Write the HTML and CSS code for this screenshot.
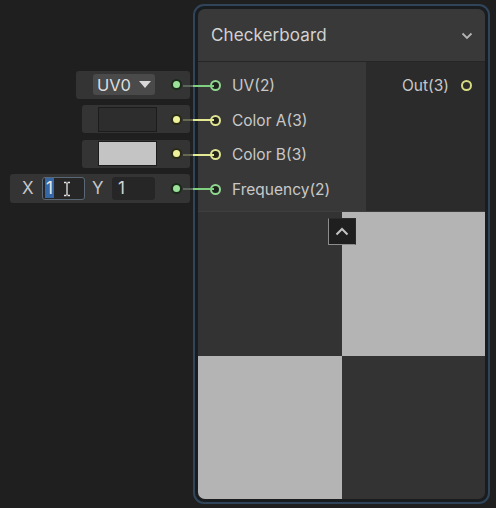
FILE: index.html
```html
<!DOCTYPE html>
<html>
<head>
<meta charset="utf-8">
<link rel="stylesheet" href="styles.css">
</head>
<body>
<div class="canvas">
  <div class="ports-col">
    <div class="prow">
      <div class="ctl ctl-uv">
        <div class="dropdown"><span>UV0</span><span class="tri"></span></div>
        <span class="dot green"></span>
        <span class="wire wire-green"></span>
      </div>
    </div>
    <div class="prow">
      <div class="ctl ctl-color">
        <span class="swatch swatch-dark"></span>
        <span class="dot yellow"></span>
        <span class="wire wire-yellow"></span>
      </div>
    </div>
    <div class="prow">
      <div class="ctl ctl-color">
        <span class="swatch swatch-light"></span>
        <span class="dot yellow"></span>
        <span class="wire wire-yellow"></span>
      </div>
    </div>
    <div class="prow">
      <div class="ctl ctl-freq">
        <span class="axis">X</span>
        <span class="field field-focus"><span class="sel">1</span>
          <svg class="ibeam" width="8" height="16" viewBox="0 0 8 16"><path d="M1 1.5h2.5M4.5 1.5H7M4 2v12M1 14.5h2.5M4.5 14.5H7" stroke="#e6e6e6" stroke-width="1.3" fill="none"/></svg>
        </span>
        <span class="axis axis-y">Y</span>
        <span class="field"><span class="val">1</span></span>
        <span class="dot green"></span>
        <span class="wire wire-green"></span>
      </div>
    </div>
  </div>

  <div class="node">
    <div class="node-inner">
      <div class="header">
        <span class="title">Checkerboard</span>
        <svg class="chev" width="12" height="8" viewBox="0 0 12 8"><path d="M1.5 1.5L6 6l4.5-4.5" stroke="#b4b4b4" stroke-width="1.8" fill="none"/></svg>
      </div>
      <div class="io">
        <div class="inputs">
          <div class="slot"><span class="port port-green"></span><span class="label">UV(2)</span></div>
          <div class="slot"><span class="port port-yellow"></span><span class="label">Color A(3)</span></div>
          <div class="slot"><span class="port port-yellow"></span><span class="label">Color B(3)</span></div>
          <div class="slot"><span class="port port-green"></span><span class="label">Frequency(2)</span></div>
        </div>
        <div class="outputs">
          <div class="slot slot-out"><span class="label">Out(3)</span><span class="port port-out"></span></div>
        </div>
      </div>
      <div class="preview">
        <div class="checker">
          <span class="cell cell-dark"></span>
          <span class="cell cell-light"></span>
          <span class="cell cell-light"></span>
          <span class="cell cell-dark"></span>
        </div>
        <div class="collapse">
          <svg width="14" height="9" viewBox="0 0 14 9"><path d="M1.5 7.5L7 2l5.5 5.5" stroke="#c4c4c4" stroke-width="2" fill="none"/></svg>
        </div>
      </div>
    </div>
  </div>
</div>
</body>
</html>
```

FILE: styles.css
```css
html, body {
  margin: 0;
  padding: 0;
  background: #1f1f1f;
}

.canvas {
  display: flex;
  align-items: flex-start;
  width: 496px;
  height: 508px;
  overflow: hidden;
  background: #1f1f1f;
  font-family: "Inter", "Noto Sans", sans-serif;
  color: #c9c9c9;
}

/* ---------- left inline controls ---------- */
.ports-col {
  width: 190px;
  flex: none;
  padding-top: 68.5px;
  position: relative;
  z-index: 2;
}

.prow {
  height: 34.5px;
  display: flex;
  align-items: center;
  justify-content: flex-end;
}

.ctl {
  position: relative;
  display: flex;
  align-items: center;
  box-sizing: border-box;
  background: #343434;
  border-radius: 3px;
  margin-top: -2px;
}

.ctl-uv {
  width: 114px;
  height: 28px;
  padding-left: 17px;
}

.dropdown {
  display: flex;
  align-items: center;
  gap: 8px;
  box-sizing: border-box;
  width: 62px;
  height: 21px;
  padding-left: 4px;
  background: #4a4a4a;
  border-radius: 3px;
  font-size: 16.5px;
  color: #dedede;
}

.tri {
  width: 0;
  height: 0;
  border-left: 6px solid transparent;
  border-right: 6px solid transparent;
  border-top: 7px solid #d8d8d8;
  margin-top: -1px;
}

.ctl-color {
  width: 108px;
  height: 28px;
  padding-left: 16px;
}

.swatch {
  box-sizing: border-box;
  width: 59px;
  height: 25px;
  border: 1px solid #1c1c1c;
}

.swatch-dark { background: #2d2d2d; }
.swatch-light { background: #c4c4c4; }

.ctl-freq {
  width: 180px;
  height: 29px;
  padding-left: 12px;
  font-size: 17px;
}

.axis {
  width: 11px;
  text-align: center;
  color: #c6c6c6;
}

.axis-y { margin-left: 7px; }

.field {
  position: relative;
  display: flex;
  align-items: center;
  box-sizing: border-box;
  width: 43px;
  height: 23px;
  margin-left: 9px;
  background: #262626;
  border: 1px solid #262626;
  border-radius: 3px;
  font-size: 17px;
  color: #d6d6d6;
}

.field-focus {
  margin-left: 9px;
  border-color: #5a6876;
}

.sel {
  margin-left: 2px;
  padding: 0 1px;
  line-height: 20px;
  background: #3566a6;
  color: #e8e8e8;
}

.val { margin-left: 5px; }

.ibeam {
  position: absolute;
  left: 20px;
  top: 3px;
}

.dot {
  flex: none;
  width: 7px;
  height: 7px;
  margin-left: auto;
  margin-right: 10px;
  border-radius: 50%;
  box-shadow: 0 0 0 2px #1b2a1b;
}

.dot.green { background: #9ae29a; }
.dot.yellow { background: #eef29a; box-shadow: 0 0 0 2px #2a2a18; }

.wire {
  position: absolute;
  top: 50%;
  height: 2px;
  width: 31px;
}

.ctl-uv .wire { left: 107px; }
.ctl-color .wire { left: 101px; }
.ctl-freq .wire { left: 173px; }

.wire-green { background: linear-gradient(to right, #5b665b 0 10px, #7fd07f 10px); }
.wire-yellow { background: linear-gradient(to right, #66684f 0 10px, #e4ea94 10px); }

/* ---------- node ---------- */
.node {
  flex: none;
  box-sizing: border-box;
  width: 297px;
  height: 500px;
  margin-left: 3px;
  margin-top: 4px;
  padding: 3px;
  border: 2px solid #30455a;
  border-radius: 11px;
  background: #1a1d20;
}

.node-inner {
  height: 100%;
  border-radius: 7px;
  overflow: hidden;
  display: flex;
  flex-direction: column;
  background: #2a2a2a;
}

.header {
  height: 52px;
  flex: none;
  display: flex;
  align-items: center;
  justify-content: space-between;
  padding: 0 12px 0 13px;
  background: #393939;
  border-bottom: 1px solid #262626;
}

.title {
  font-size: 17px;
  color: #d2d2d2;
  letter-spacing: 0.1px;
}

.chev { margin-top: 2px; }

.io {
  display: flex;
  height: 149px;
  flex: none;
  border-bottom: 1px solid #3e3e3e;
}

.inputs {
  width: 168px;
  box-sizing: border-box;
  padding-top: 6.5px;
  background: #383838;
}

.outputs {
  flex: 1;
  padding-top: 6.5px;
  background: #2b2b2b;
}

.slot {
  height: 34.5px;
  display: flex;
  align-items: center;
  padding-left: 12px;
  font-size: 15.5px;
  color: #c8c8c8;
}

.slot-out {
  justify-content: flex-end;
  padding-left: 0;
  padding-right: 13px;
}

.port {
  flex: none;
  box-sizing: border-box;
  width: 11px;
  height: 11px;
  border-radius: 50%;
  border: 2px solid #8ed08e;
  background: #1e231e;
}

.port-green { border-color: #90d590; }
.port-yellow { border-color: #dfe391; background: #23231c; }
.port-out { border-color: #d6da80; background: #2b2b2b; }

.inputs .label { margin-left: 11px; }
.slot-out .label { margin-right: 12px; }

.preview {
  position: relative;
  flex: 1;
}

.checker {
  display: grid;
  grid-template-columns: 1fr 1fr;
  grid-template-rows: 1fr 1fr;
  height: 100%;
}

.cell-dark { background: #333333; }
.cell-light { background: #b4b4b4; }

.collapse {
  position: absolute;
  left: 130px;
  top: 6px;
  width: 28px;
  height: 27px;
  box-sizing: border-box;
  display: flex;
  align-items: center;
  justify-content: center;
  background: #1f1f1f;
  border: 1px solid #2a2a2a;
  border-left-color: #8c8c8c;
  border-bottom-color: #8c8c8c;
}
```
